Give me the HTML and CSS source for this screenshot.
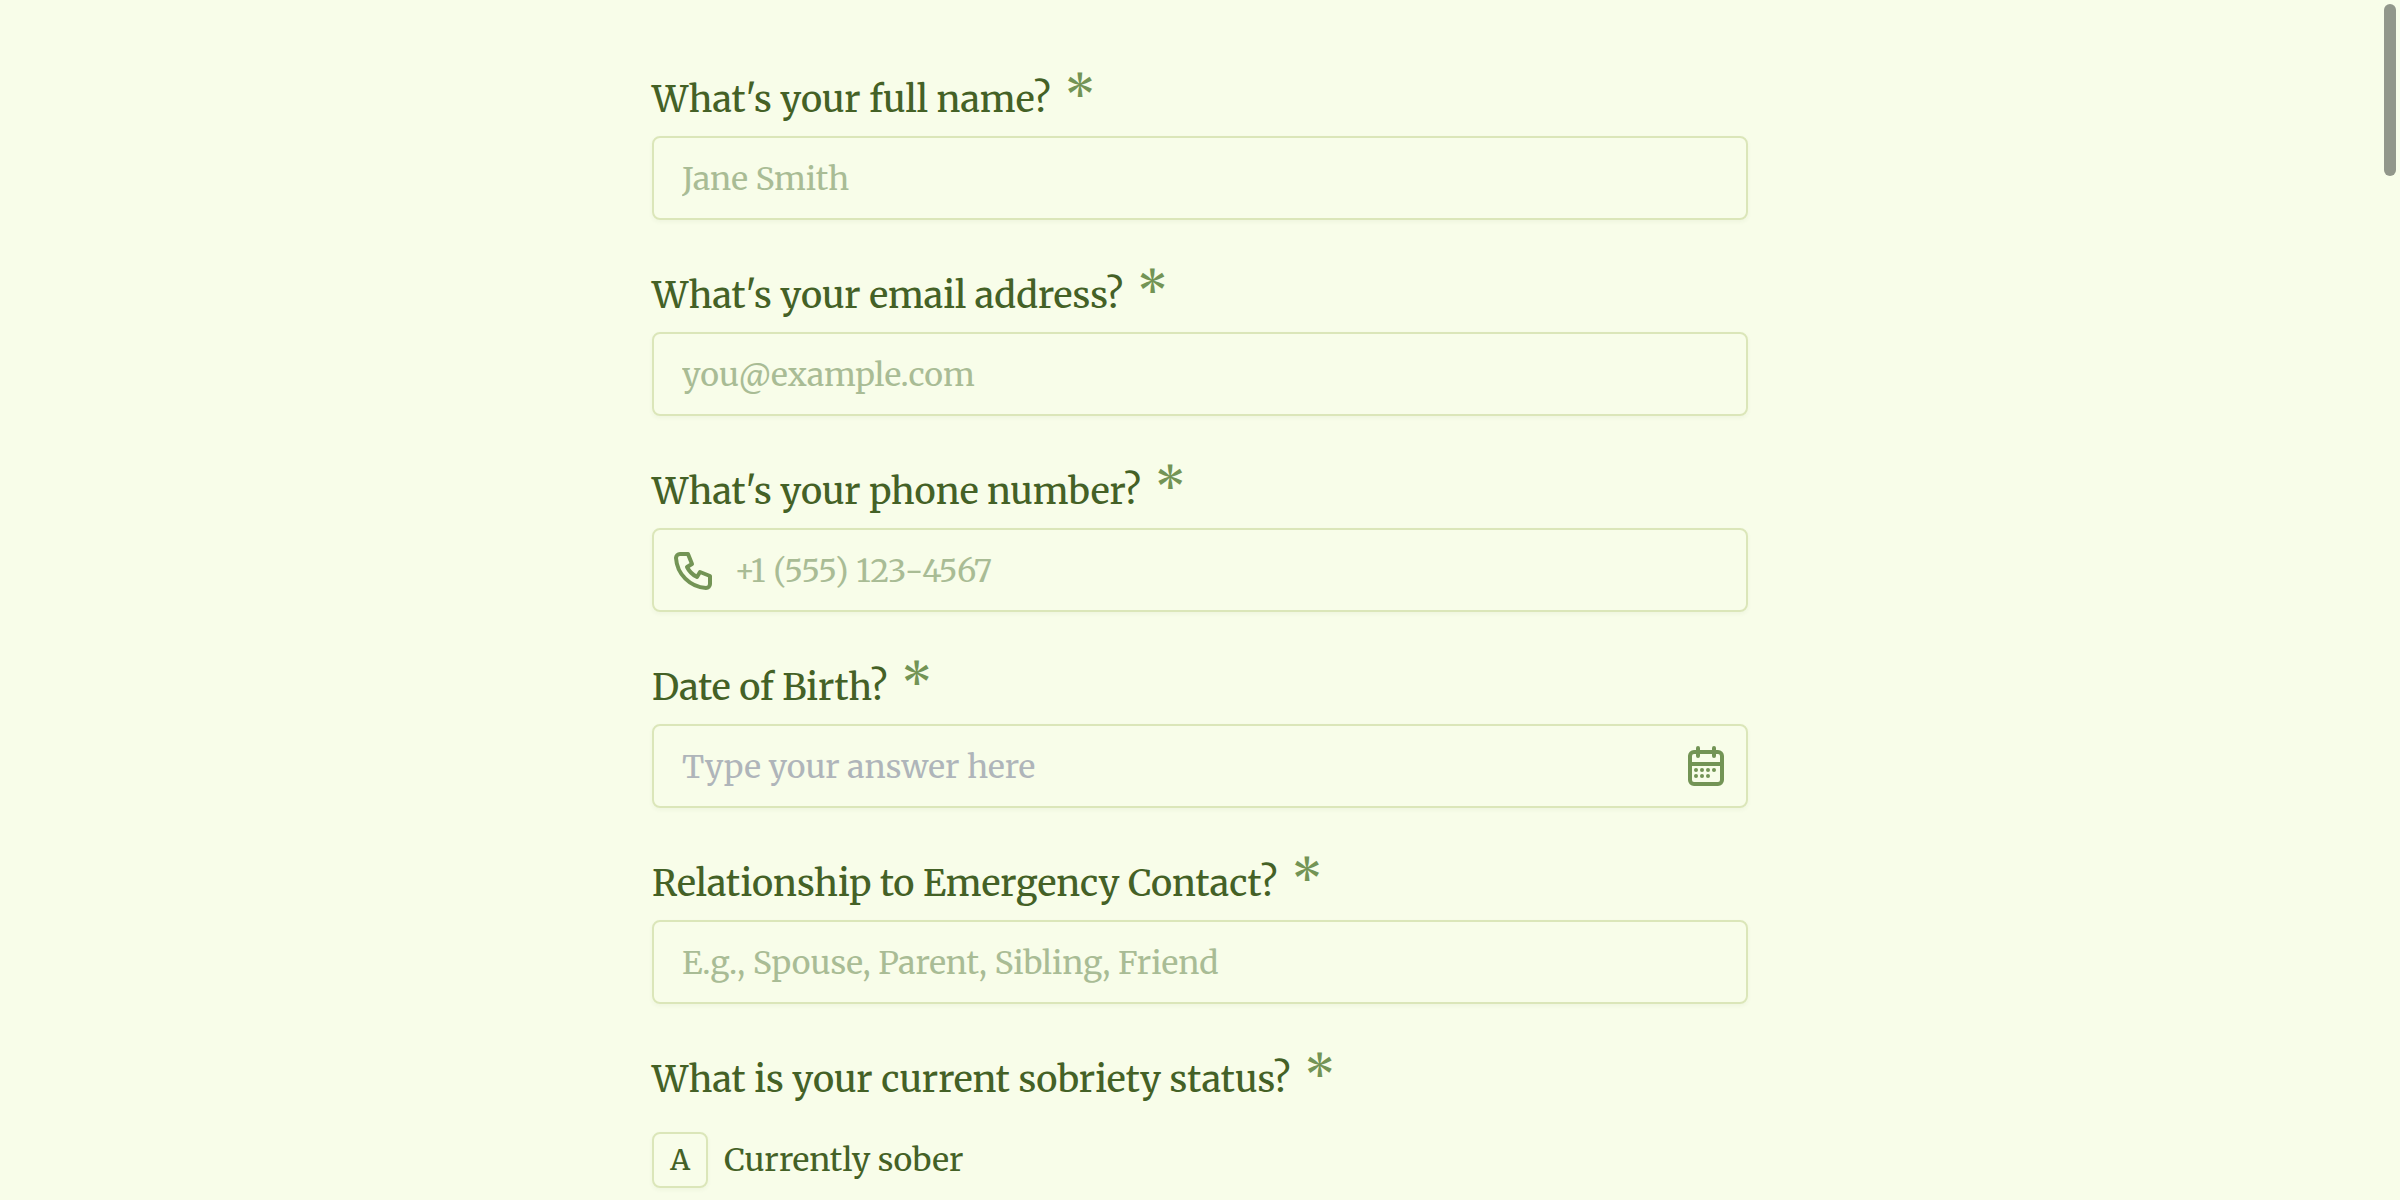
FILE: index.html
```html
<!DOCTYPE html>
<html lang="en">
<head>
    <meta charset="utf-8">
    <meta name="viewport" content="width=device-width, initial-scale=1">
    <title>Intake Form</title>
    <link rel="stylesheet" href="styles.css">
</head>
<body>
    <form class="form" action="#" method="post">
        <div class="question">
            <label class="question-label" for="name">What's your full name? <span class="required">*</span></label>
            <div class="field">
                <input class="field-input" type="text" id="name" name="name" placeholder="Jane Smith" required>
            </div>
        </div>

        <div class="question">
            <label class="question-label" for="email">What's your email address? <span class="required">*</span></label>
            <div class="field">
                <input class="field-input" type="email" id="email" name="email" placeholder="you@example.com" required>
            </div>
        </div>

        <div class="question">
            <label class="question-label" for="phone">What's your phone number? <span class="required">*</span></label>
            <div class="field field-phone">
                <svg class="icon" viewBox="0 0 24 24" aria-hidden="true">
                    <path d="M5 4h4l2 5-2.500 1.500a11 11 0 0 0 5 5L15 13l5 2v4a2 2 0 0 1-2 2A16 16 0 0 1 3 6a2 2 0 0 1 2-2z"/>
                </svg>
                <input class="field-input" type="tel" id="phone" name="phone" placeholder="+1 (555) 123-4567" required>
            </div>
        </div>

        <div class="question">
            <label class="question-label" for="birth">Date of Birth? <span class="required">*</span></label>
            <div class="field field-date">
                <input class="field-input" type="text" id="birth" name="birth" placeholder="Type your answer here" required>
                <button class="calendar-button" type="button" aria-label="Open calendar">
                    <svg class="icon" viewBox="0 0 24 24" aria-hidden="true">
                        <rect x="4" y="5" width="16" height="16" rx="2"/>
                        <path d="M8 3v4M16 3v4M4 11h16"/>
                        <g class="icon-dots">
                            <circle cx="7" cy="14" r="1"/>
                            <circle cx="10" cy="14" r="1"/>
                            <circle cx="13" cy="14" r="1"/>
                            <circle cx="16" cy="14" r="1"/>
                            <circle cx="7" cy="17" r="1"/>
                            <circle cx="10" cy="17" r="1"/>
                            <circle cx="13" cy="17" r="1"/>
                        </g>
                    </svg>
                </button>
            </div>
        </div>

        <div class="question">
            <label class="question-label" for="relationship">Relationship to Emergency Contact? <span class="required">*</span></label>
            <div class="field">
                <input class="field-input" type="text" id="relationship" name="relationship" placeholder="E.g., Spouse, Parent, Sibling, Friend" required>
            </div>
        </div>

        <fieldset class="question">
            <legend class="question-label">What is your current sobriety status? <span class="required">*</span></legend>
            <label class="option" for="sober">
                <input class="option-input" type="radio" id="sober" name="status" value="sober">
                <span class="option-key">A</span>
                <span>Currently sober</span>
            </label>
        </fieldset>
    </form>
    <div class="scroll-thumb"></div>
</body>
</html>
```
FILE: styles.css
```css
* {
    box-sizing: border-box;
}

body {
    margin: 0;
    background-color: #f8fde9;
    color: #446126;
    font-family: Merriweather, "Liberation Serif", serif;
    font-size: 32px;
}

.form {
    display: flex;
    flex-direction: column;
    gap: 48px;
    max-width: 1128px;
    margin: 0 auto;
    padding: 72px 16px 12px;
}

.question {
    min-width: 0;
    margin: 0;
    padding: 0;
    border: 0;
}

.question-label {
    display: flex;
    gap: 14px;
    margin-bottom: 8px;
    padding: 0;
    font-size: 36px;
    font-weight: 500;
    line-height: 56px;
}

.required {
    color: #739455;
    font-size: 48px;
    line-height: 46px;
}

.field {
    display: flex;
    align-items: center;
    height: 84px;
    border: 2px solid #dbe6b9;
    border-radius: 8px;
    box-shadow: 0 2px 4px rgba(68, 97, 38, 0.05);
}

.field:focus-within {
    border-color: #739455;
}

.field-input {
    flex: 1;
    min-width: 0;
    height: 100%;
    padding: 2px 28px 0;
    border: 0;
    outline: 0;
    background: transparent;
    color: #446126;
    font: inherit;
}

.field-input::placeholder {
    color: #a9bc95;
    opacity: 1;
}

.field-phone {
    padding-left: 16px;
}

.field-phone .field-input {
    padding-left: 16px;
}

.field-date {
    padding-right: 16px;
}

.field-date .field-input::placeholder {
    color: #afb5ba;
}

.icon {
    display: block;
    flex: none;
    width: 48px;
    height: 48px;
    fill: none;
    stroke: #739455;
    stroke-width: 2;
    stroke-linecap: round;
    stroke-linejoin: round;
}

.icon-dots {
    fill: #739455;
    stroke: none;
}

.calendar-button {
    padding: 0;
    border: 0;
    background: none;
    cursor: pointer;
}

.option {
    display: flex;
    align-items: center;
    gap: 16px;
    width: fit-content;
    margin-top: 16px;
    cursor: pointer;
}

.option-input {
    position: absolute;
    opacity: 0;
}

.option-key {
    display: flex;
    align-items: center;
    justify-content: center;
    width: 56px;
    height: 56px;
    border: 2px solid #dbe6b9;
    border-radius: 8px;
    box-shadow: 0 2px 4px rgba(68, 97, 38, 0.05);
    font-size: 28px;
    font-weight: 500;
}

.option-input:checked + .option-key {
    border-color: #739455;
}

.scroll-thumb {
    position: fixed;
    top: 4px;
    right: 4px;
    width: 12px;
    height: 172px;
    border-radius: 6px;
    background: #92978b;
}
```
